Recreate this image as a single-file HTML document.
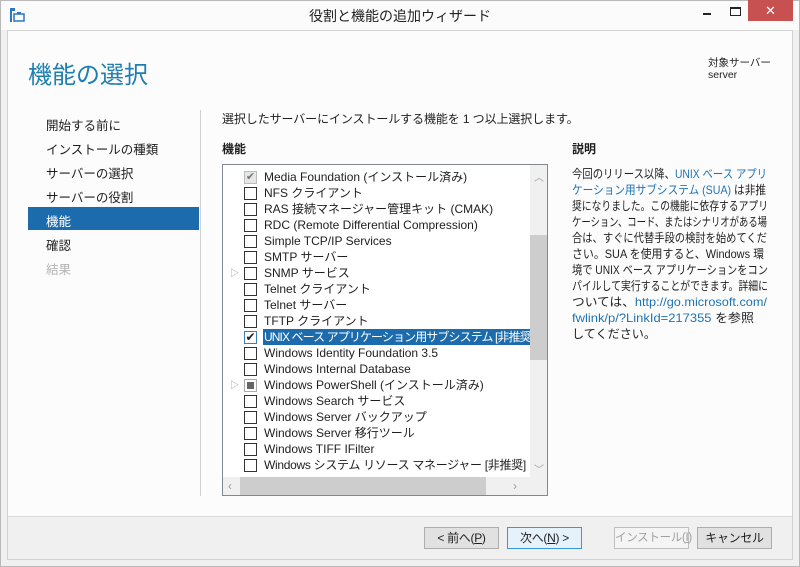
<!DOCTYPE html>
<html><head><meta charset="utf-8"><style>
*{margin:0;padding:0;box-sizing:border-box}
body{width:800px;height:567px;background:#f0f0f0;font-family:"Liberation Sans","Noto Sans CJK JP",sans-serif;font-size:12px;color:#1e1e1e;position:relative;overflow:hidden}
.a{position:absolute}
#win{left:0;top:0;width:800px;height:567px;border:1px solid #b9b9b9;background:#f0f0f0}
#title{left:1px;top:1px;width:798px;height:29px;background:#fbfbfb;text-align:center;font-size:14px;line-height:30px;color:#222}
#panel{left:7px;top:30px;width:786px;height:487px;background:#fcfcfc;border:1px solid #d2d2d2;border-bottom:none}
#bot{left:7px;top:516px;width:786px;height:44px;background:#f0f0f0;border:1px solid #d2d2d2;border-top:1px solid #dcdcdc}
.nav{left:46px;font-size:12.5px}
.btn{top:527px;height:22px;border:1px solid #adadad;background:#e1e1e1;text-align:center;line-height:20px;font-size:12px;white-space:nowrap;letter-spacing:-0.3px}
.row{position:absolute;left:0;height:16px;line-height:16px;font-size:12px;white-space:nowrap}
.cb{position:absolute;left:21px;top:2px;width:13px;height:13px;border:1px solid #333;background:#fff}
.tx{position:absolute;left:40px;top:0;padding:0 1px}
#desc text{font-family:"Liberation Sans","Noto Sans CJK JP",sans-serif;font-size:12px;fill:#1e1e1e}
#desc tspan.k{fill:#1e73b4}
</style></head><body>
<div id="win" class="a"></div>
<div id="title" class="a">役割と機能の追加ウィザード</div>
<svg class="a" style="left:10px;top:8px" width="16" height="14"><rect x="0" y="0" width="5" height="3" fill="#2a77c6"/><rect x="0" y="3" width="2" height="11" fill="#2a77c6"/><rect x="4" y="6" width="10" height="7" fill="none" stroke="#2a77c6" stroke-width="1.5"/><rect x="7" y="4" width="4" height="2" fill="#2a77c6"/></svg>
<div class="a" style="left:703px;top:13px;width:8px;height:2px;background:#222"></div>
<div class="a" style="left:730px;top:7px;width:11px;height:9px;border:1px solid #222;border-top:2px solid #222"></div>
<div class="a" style="left:748px;top:0;width:45px;height:21px;background:#c75050;color:#fff;text-align:center;line-height:21px;font-size:13px">✕</div>
<div id="panel" class="a"></div>
<div class="a" style="left:28px;top:55px;font-size:24px;color:#1d7fb0">機能の選択</div>
<div class="a" style="left:708px;top:57px;font-size:10.5px;line-height:12px">対象サーバー<br>server</div>
<div class="a" style="left:200px;top:110px;width:1px;height:386px;background:#d0d0d0"></div>
<div class="nav a" style="top:115px">開始する前に</div>
<div class="nav a" style="top:139px">インストールの種類</div>
<div class="nav a" style="top:163px">サーバーの選択</div>
<div class="nav a" style="top:187px">サーバーの役割</div>
<div class="a" style="left:28px;top:207px;width:171px;height:23px;background:#1c6cad"></div>
<div class="nav a" style="top:211px;color:#fff">機能</div>
<div class="nav a" style="top:235px">確認</div>
<div class="nav a" style="top:259px;color:#b4b4b4">結果</div>
<div class="a" style="left:222px;top:110px;font-size:12px;letter-spacing:-0.1px">選択したサーバーにインストールする機能を 1 つ以上選択します。</div>
<div class="a" style="left:222px;top:140px;font-size:12px;font-weight:bold">機能</div>
<div class="a" style="left:572px;top:140px;font-size:12px;font-weight:bold">説明</div>
<div class="a" style="left:222px;top:164px;width:326px;height:332px;border:1px solid #828790;background:#fff;overflow:hidden">
<div class="a" style="left:307px;top:0;width:17px;height:312px;background:#f0f0f0"></div>
<div class="a" style="left:307px;top:70px;width:17px;height:125px;background:#cdcdcd"></div>
<div class="a" style="left:311px;top:4px;color:#999;font-size:10px">︿</div>
<div class="a" style="left:311px;top:296px;color:#999;font-size:10px">﹀</div>
<div class="a" style="left:0;top:312px;width:307px;height:18px;background:#f0f0f0"></div>
<div class="a" style="left:17px;top:312px;width:246px;height:18px;background:#cdcdcd"></div>
<div class="a" style="left:5px;top:314px;color:#999">‹</div>
<div class="a" style="left:290px;top:314px;color:#999">›</div>
<div class="a" style="left:307px;top:312px;width:17px;height:18px;background:#f0f0f0"></div>
<div id="rows" class="a" style="left:0;top:4px;width:307px;height:306px;overflow:hidden">
<div class="row" style="top:0"><span class="cb" style="border-color:#bbb;background:#e6e6e6;color:#777;font-size:11px;line-height:11px;text-align:center">✔</span><span class="tx">Media Foundation (インストール済み)</span></div>
<div class="row" style="top:16px"><span class="cb"></span><span class="tx">NFS クライアント</span></div>
<div class="row" style="top:32px"><span class="cb"></span><span class="tx">RAS 接続マネージャー管理キット (CMAK)</span></div>
<div class="row" style="top:48px"><span class="cb"></span><span class="tx">RDC (Remote Differential Compression)</span></div>
<div class="row" style="top:64px"><span class="cb"></span><span class="tx">Simple TCP/IP Services</span></div>
<div class="row" style="top:80px"><span class="cb"></span><span class="tx">SMTP サーバー</span></div>
<div class="row" style="top:96px"><span style="position:absolute;left:7px;top:0;color:#999;font-size:9px">▷</span><span class="cb"></span><span class="tx">SNMP サービス</span></div>
<div class="row" style="top:112px"><span class="cb"></span><span class="tx">Telnet クライアント</span></div>
<div class="row" style="top:128px"><span class="cb"></span><span class="tx">Telnet サーバー</span></div>
<div class="row" style="top:144px"><span class="cb"></span><span class="tx">TFTP クライアント</span></div>
<div class="row" style="top:160px"><span class="cb" style="border-color:#3c7fb1;font-size:12px;line-height:11px;text-align:center">✔</span><span class="tx" style="background:#1c6cad;color:#fff;letter-spacing:-0.9px">UNIX ベース アプリケーション用サブシステム [非推奨]</span></div>
<div class="row" style="top:176px"><span class="cb"></span><span class="tx">Windows Identity Foundation 3.5</span></div>
<div class="row" style="top:192px"><span class="cb"></span><span class="tx">Windows Internal Database</span></div>
<div class="row" style="top:208px"><span style="position:absolute;left:7px;top:0;color:#999;font-size:9px">▷</span><span class="cb" style="border-color:#aaa"><span style="position:absolute;left:2px;top:2px;width:7px;height:7px;background:#666"></span></span><span class="tx">Windows PowerShell (インストール済み)</span></div>
<div class="row" style="top:224px"><span class="cb"></span><span class="tx">Windows Search サービス</span></div>
<div class="row" style="top:240px"><span class="cb"></span><span class="tx">Windows Server バックアップ</span></div>
<div class="row" style="top:256px"><span class="cb"></span><span class="tx">Windows Server 移行ツール</span></div>
<div class="row" style="top:272px"><span class="cb"></span><span class="tx">Windows TIFF IFilter</span></div>
<div class="row" style="top:288px"><span class="cb"></span><span class="tx" style="letter-spacing:-0.3px">Windows システム リソース マネージャー [非推奨]</span></div>
</div></div>
<svg id="desc" class="a" style="left:572px;top:164px" width="210" height="180">
<text x="0" y="14" textLength="195" lengthAdjust="spacingAndGlyphs">今回のリリース以降、<tspan class="k">UNIX ベース アプリ</tspan></text>
<text x="0" y="30" textLength="194" lengthAdjust="spacingAndGlyphs"><tspan class="k">ケーション用サブシステム (SUA)</tspan> は非推</text>
<text x="0" y="46" textLength="196" lengthAdjust="spacingAndGlyphs">奨になりました。この機能に依存するアプリ</text>
<text x="0" y="62" textLength="195" lengthAdjust="spacingAndGlyphs">ケーション、コード、またはシナリオがある場</text>
<text x="0" y="78" textLength="195" lengthAdjust="spacingAndGlyphs">合は、すぐに代替手段の検討を始めてくだ</text>
<text x="0" y="94" textLength="192" lengthAdjust="spacingAndGlyphs">さい。SUA を使用すると、Windows 環</text>
<text x="0" y="110" textLength="196" lengthAdjust="spacingAndGlyphs">境で UNIX ベース アプリケーションをコン</text>
<text x="0" y="126" textLength="196" lengthAdjust="spacingAndGlyphs">パイルして実行することができます。詳細に</text>
<text x="0" y="142" textLength="195" lengthAdjust="spacingAndGlyphs">ついては、<tspan class="k">http://go.microsoft.com/</tspan></text>
<text x="0" y="158" textLength="182" lengthAdjust="spacingAndGlyphs"><tspan class="k">fwlink/p/?LinkId=217355</tspan> を参照</text>
<text x="0" y="174" textLength="84" lengthAdjust="spacingAndGlyphs">してください。</text>
</svg>
<div id="bot" class="a"></div>
<div class="btn a" style="left:424px;width:75px">&lt; 前へ(<u>P</u>)</div>
<div class="btn a" style="left:507px;width:75px;border-color:#3c95e0;background:#e5f1fb">次へ(<u>N</u>) &gt;</div>
<div class="btn a" style="left:614px;width:75px;border-color:#bfbfbf;background:#f4f4f4;color:#a0a0a0;font-size:11.5px">インストール(<u>I</u>)</div>
<div class="btn a" style="left:697px;width:75px">キャンセル</div>
</body></html>
